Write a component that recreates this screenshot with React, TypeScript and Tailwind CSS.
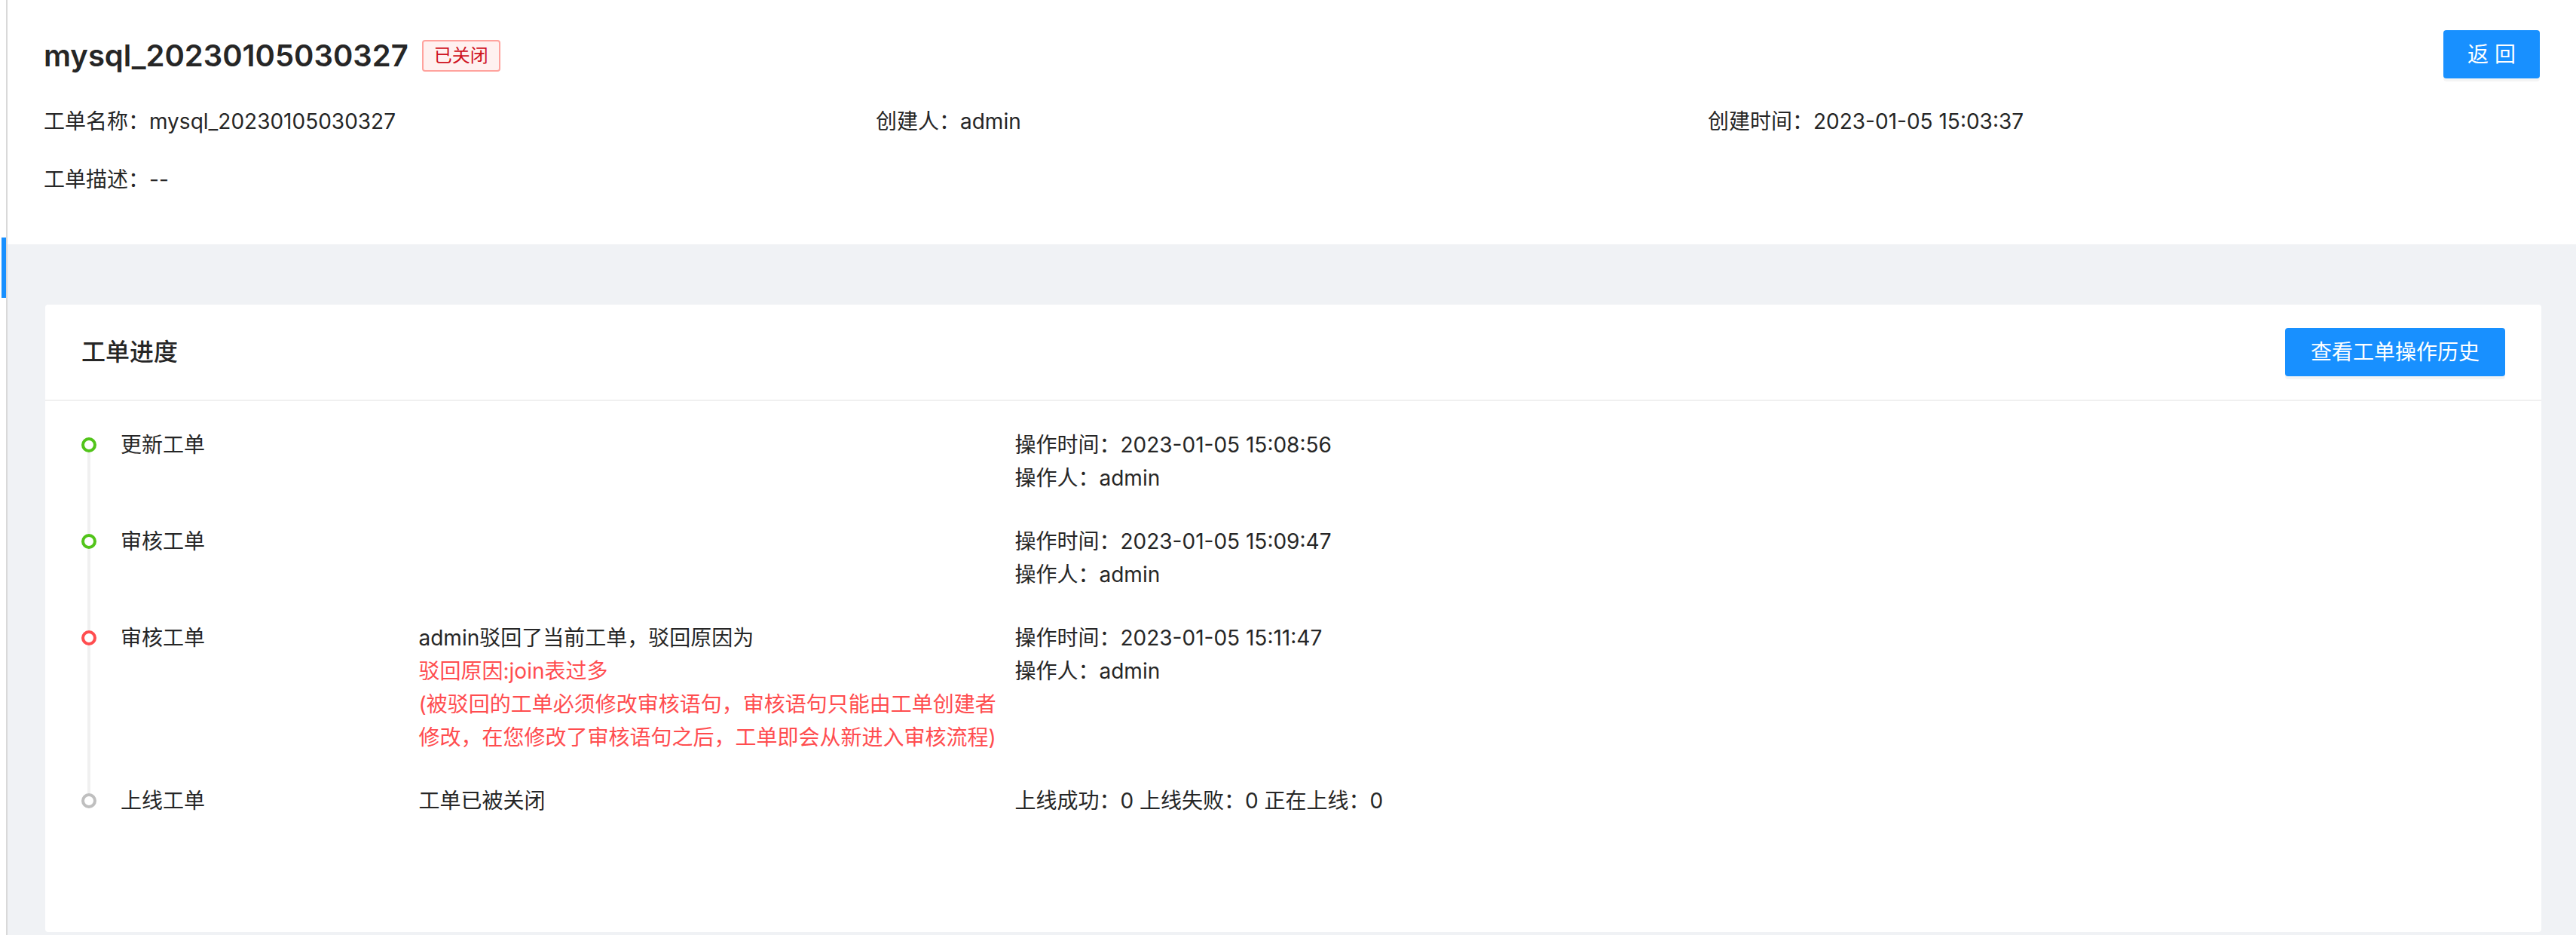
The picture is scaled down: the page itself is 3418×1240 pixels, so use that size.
import React from 'react';

type Status = 'green' | 'red' | 'gray';

interface TimelineEntry {
  title: string;
  status: Status;
  content?: React.ReactNode;
  meta: React.ReactNode;
}

const dotColor: Record<Status, string> = {
  green: 'border-[#52c41a]',
  red: 'border-[#ff4d4f]',
  gray: 'border-[#bfbfbf]',
};

const entries: TimelineEntry[] = [
  {
    title: '更新工单',
    status: 'green',
    meta: (
      <>
        <div>操作时间：2023-01-05 15:08:56</div>
        <div>操作人：admin</div>
      </>
    ),
  },
  {
    title: '审核工单',
    status: 'green',
    meta: (
      <>
        <div>操作时间：2023-01-05 15:09:47</div>
        <div>操作人：admin</div>
      </>
    ),
  },
  {
    title: '审核工单',
    status: 'red',
    content: (
      <>
        <div>admin驳回了当前工单，驳回原因为</div>
        <div className="text-[#ff4d4f]">驳回原因:join表过多</div>
        <div className="text-[#ff4d4f]">
          (被驳回的工单必须修改审核语句，审核语句只能由工单创建者修改，在您修改了审核语句之后，工单即会从新进入审核流程)
        </div>
      </>
    ),
    meta: (
      <>
        <div>操作时间：2023-01-05 15:11:47</div>
        <div>操作人：admin</div>
      </>
    ),
  },
  {
    title: '上线工单',
    status: 'gray',
    content: <div>工单已被关闭</div>,
    meta: <div>上线成功：0 上线失败：0 正在上线：0</div>,
  },
];

function TimelineItem({ entry, last }: { entry: TimelineEntry; last: boolean }) {
  return (
    <div className="flex">
      <div className="flex w-[20px] shrink-0 flex-col items-center">
        <div className={`h-[20px] w-[20px] rounded-full border-4 bg-white ${dotColor[entry.status]}`} />
        {!last && <div className="w-[4px] flex-1 bg-[#f0f0f0]" />}
      </div>
      <div
        className={`ml-[32px] mt-[-12px] grid flex-1 grid-cols-[3fr_6fr_15fr] ${
          last ? 'pb-[20px]' : 'pb-[52px]'
        }`}
      >
        <div>{entry.title}</div>
        <div>{entry.content}</div>
        <div>{entry.meta}</div>
      </div>
    </div>
  );
}

export default function App() {
  return (
    <div className="flex h-[1240px] w-full font-['Inter','Noto_Sans_CJK_SC',sans-serif] text-[28px] leading-[44px] text-[#262626]">
      {/* collapsed side bar */}
      <div className="flex w-[10px] shrink-0 flex-col border-r-2 border-[#d9d9d9] bg-white pt-[315px]">
        <div className="ml-[2px] h-[80px] w-[6px] bg-[#1890ff]" />
      </div>

      <div className="flex min-w-0 flex-1 flex-col">
        {/* page header */}
        <div className="h-[324px] shrink-0 bg-white px-[48px] pt-[40px]">
          <div className="flex h-[64px] items-center justify-between">
            <div className="mt-[4px] flex items-center gap-[18px]">
              <h1 className="text-[40px] font-semibold leading-[56px]">mysql_20230105030327</h1>
              <span className="rounded-[4px] border-2 border-[#ffa39e] bg-[#fff1f0] px-[14px] text-[24px] leading-[38px] text-[#cf1322]">
                已关闭
              </span>
            </div>
            <button className="h-[64px] rounded-[4px] bg-[#1890ff] px-[32px] text-[28px] text-white shadow-[0_4px_0_rgba(0,0,0,0.045)]">
              返 回
            </button>
          </div>
          <div className="mt-[35px] grid grid-cols-3 gap-y-[33px]">
            <div>工单名称：mysql_20230105030327</div>
            <div>创建人：admin</div>
            <div>创建时间：2023-01-05 15:03:37</div>
            <div>工单描述：--</div>
          </div>
        </div>

        {/* progress card */}
        <div className="flex flex-1 flex-col bg-[#f0f2f5] pb-[4px] pl-[50px] pr-[46px] pt-[80px]">
          <div className="flex-1 rounded-[4px] bg-white">
            <div className="flex h-[128px] items-center justify-between border-b-2 border-[#f0f0f0] px-[48px]">
              <div className="text-[32px] font-medium">工单进度</div>
              <button className="h-[64px] rounded-[4px] bg-[#1890ff] px-[34px] text-[28px] text-white shadow-[0_4px_0_rgba(0,0,0,0.045)]">
                查看工单操作历史
              </button>
            </div>
            <div className="px-[48px] pt-[48px]">
              {entries.map((entry, i) => (
                <TimelineItem key={i} entry={entry} last={i === entries.length - 1} />
              ))}
            </div>
          </div>
        </div>
      </div>
    </div>
  );
}
